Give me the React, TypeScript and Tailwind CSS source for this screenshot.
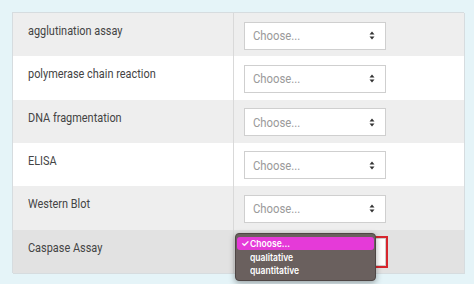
import React from "react";

const rows = [
  { label: "agglutination assay", bg: "bg-[#eeeeee]" },
  { label: "polymerase chain reaction", bg: "bg-white" },
  { label: "DNA fragmentation", bg: "bg-[#eeeeee]" },
  { label: "ELISA", bg: "bg-white" },
  { label: "Western Blot", bg: "bg-[#eeeeee]" },
  { label: "Caspase Assay", bg: "bg-[#e2e2e2]" },
];

function Arrows() {
  return (
    <svg width="6" height="9" viewBox="0 0 6 9" className="shrink-0">
      <path d="M3 0.5 L5.5 3.5 L0.5 3.5 Z" fill="#333" />
      <path d="M3 8.5 L5.5 5.5 L0.5 5.5 Z" fill="#333" />
    </svg>
  );
}

function Select({ focused }: { focused?: boolean }) {
  return (
    <div
      className={
        "w-[142px] h-[28px] bg-white border border-[#cfcfcf] flex items-center justify-between pl-[8px] pr-[10px] " +
        (focused ? "outline-2 outline-[#d7262e] outline-offset-0" : "")
      }
    >
      {focused ? (
        <span />
      ) : (
        <span className="inline-block text-[13px] text-[#9a9a9a] leading-none origin-left scale-x-[0.87]">
          Choose...
        </span>
      )}
      <Arrows />
    </div>
  );
}

export default function App() {
  return (
    <div
      className="relative w-[474px] h-[284px] bg-[#e5f4f8] pt-[12px] pl-[12px] overflow-hidden"
      style={{ fontFamily: "Roboto, 'Liberation Sans', sans-serif" }}
    >
      <div className="w-[452px] border-l border-t border-[#d6dcdf] shadow-[1px_1px_0_#d6dcdf]">
        {rows.map((r, i) => (
          <div key={i} className={"grid grid-cols-[220px_232px] h-[43.33px] " + r.bg}>
            <div className="pl-[15px] pt-[8px] text-[13px] leading-[19px] text-[#444] whitespace-nowrap">
              <span className="inline-block origin-left scale-x-[0.84]">{r.label}</span>
            </div>
            <div className="border-l border-[#d9d9d9] pl-[10px] pt-[8.5px]">
              <Select focused={i === 5} />
            </div>
          </div>
        ))}
      </div>

      <div
        className="absolute left-[235px] top-[233px] w-[141px] h-[48px] rounded-[4px] bg-[#6a605e] border border-[#4e4645] shadow-[0_2px_6px_rgba(0,0,0,0.35)] pt-[3px] px-[1px] text-white text-[9.5px] font-semibold"
        style={{ fontFamily: "Inter, 'Liberation Sans', sans-serif" }}
      >
        <div className="h-[13px] rounded-[3px] bg-[#e53ad8] flex items-center pl-[4px] leading-[10px]">
          <span className="w-[9px] leading-[10px]">✓</span>
          <span className="inline-block origin-left scale-x-[0.9] leading-[10px]">Choose...</span>
        </div>
        <div className="h-[14px] flex items-end pb-[1px] pl-[13px] leading-[10px]">
          <span className="inline-block origin-left scale-x-[0.9] leading-[10px]">qualitative</span>
        </div>
        <div className="h-[13px] flex items-end pb-[1px] pl-[13px] leading-[10px]">
          <span className="inline-block origin-left scale-x-[0.9] leading-[10px]">quantitative</span>
        </div>
      </div>
    </div>
  );
}
